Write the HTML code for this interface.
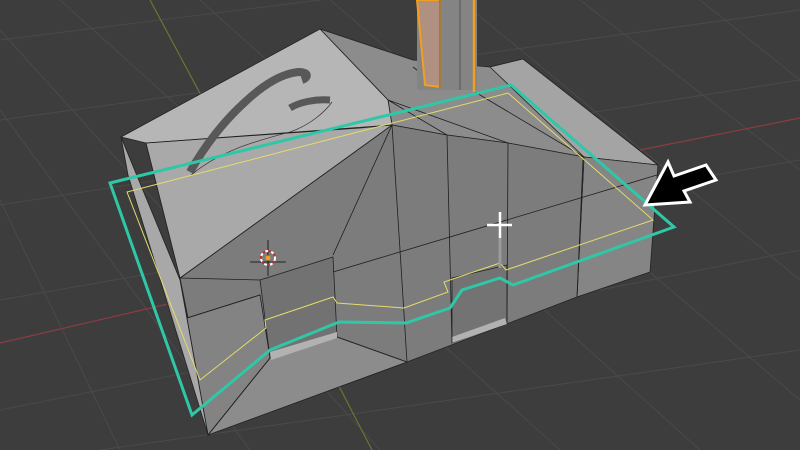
<!DOCTYPE html>
<html><head><meta charset="utf-8"><style>
html,body{margin:0;padding:0;background:#3d3d3d;width:800px;height:450px;overflow:hidden}
svg{display:block}
</style></head><body>
<svg width="800" height="450" viewBox="0 0 800 450" xmlns="http://www.w3.org/2000/svg">
<rect width="800" height="450" fill="#3d3d3d"/>
<g stroke="#4a4a4a" stroke-width="1" fill="none">
<path d="M0 40 L800 -60 M0 120 L800 10 M0 205 L800 80 M0 300 L800 160 M0 410 L800 250 M100 450 L800 350 M0 30 L380 450 M0 110 L250 450 M60 0 L560 450 M200 0 L700 450 M330 0 L800 400 M460 0 L800 280 M580 0 L800 170 M700 0 L800 80 M0 200 L120 450"/>
</g>
<path d="M0 343 L185 300" stroke="#8a3c44" stroke-width="1.2"/>
<path d="M640 150 L800 118" stroke="#8a3c44" stroke-width="1.2"/>
<path d="M150 0 L225 140" stroke="#6b7530" stroke-width="1.2"/>
<path d="M310 330 L372 450" stroke="#6b7530" stroke-width="1.2"/>
<g stroke="#222" stroke-width="0.8" stroke-linejoin="round">
<!-- back roof -->
<polygon points="320,29 413,60 490,67 523,59 584,157 508,143 447,135 392,125 388,100" fill="#8c8c8c"/>
<!-- right box top -->
<polygon points="490,67 523,59 658,165 584,157" fill="#a4a4a4"/>
<!-- right box front -->
<polygon points="584,157 658,165 650,272 577,297" fill="#858585"/>
<!-- front wall -->
<polygon points="180,278 392,125 447,135 508,143 584,157 577,297 407,362 208,435 188,318" fill="#7c7c7c"/>
<!-- lower bottom faces -->
<polygon points="270,358 337,337 407,362 208,435" fill="#8c8c8c"/>
<polygon points="187,318 260,295 270,358 208,435" fill="#838383"/>
<!-- left face -->
<polygon points="121,137 180,280 208,435 128,175" fill="#a8a8a8"/>
<!-- light roof -->
<polygon points="320,29 388,100 392,125 180,278 146,143 121,137" fill="#b6b6b6"/>
<polygon points="146,143 180,278 392,125 360,128" fill="#a9a9a9"/>
<!-- doors -->
<polygon points="260,280 333,257 337,337 270,358" fill="#727272"/>
<polygon points="452,278 507,265 507,323 452,343" fill="#737373"/>
</g>
<polygon points="270,352 337,332 337,338 271,360" fill="#b2b2b2"/>
<polygon points="452,337 505,318 507,324 452,343" fill="#b2b2b2"/>
<g stroke="#1f1f1f" stroke-width="0.8" fill="none">
<path d="M392,125 L333,255 M392,125 L400,250 L407,362 M447,135 L452,343 M508,143 L507,323 M583,160 L577,297 M337,337 L407,362 M270,358 L208,435 M187,318 L260,295 M333,272 L657,175 M180,278 L260,280 M388,100 L447,135 M388,100 L508,143 M413,67 L440,88 M475,92 L584,157 M146,143 L392,125"/>
</g>
<!-- heart groove -->
<path d="M190,172 C205,145 225,120 245,102 C262,86 280,74 298,72 C310,72 308,78 302,80" fill="none" stroke="#585858" stroke-width="8" stroke-linecap="butt"/>
<path d="M290,108 C300,102 315,99 330,100" fill="none" stroke="#585858" stroke-width="7"/>
<path d="M190,176 C220,150 260,140 290,132 C310,125 325,112 332,102" fill="none" stroke="#333" stroke-width="0.7"/>
<!-- pole -->
<rect x="417" y="0" width="60" height="90" fill="#848484"/>
<polygon points="417,0 440,0 440,87 425,85" fill="#b09080" stroke="#f0a020" stroke-width="2"/>
<path d="M474 0 L474 92" stroke="#f0a020" stroke-width="2.5"/>
<path d="M440 0 L440 88 M460 0 L460 90" stroke="#555" stroke-width="1"/>
<!-- outlines -->
<polygon points="110,183 511,85 674,227 513,285 500,278 462,290 450,308 406,323 339,322 270,350 192,415" fill="none" stroke="#2fc8a6" stroke-width="3" stroke-linejoin="miter"/>
<polygon points="127,192 508,93 653,220 506,270 500,263 444,282 448,292 404,308 337,303 333,297 265,320 266,328 200,380" fill="none" stroke="#e6dc6a" stroke-width="1"/>
<!-- crosshair -->
<path d="M500 238 V268" stroke="#9a9a9a" stroke-width="3"/>
<g stroke="#fff" stroke-width="2.5"><path d="M487 225 H512 M500 212 V238"/></g>
<!-- 3d cursor -->
<path d="M250 262 H286 M268 240 V276" stroke="#222" stroke-width="1"/>
<circle cx="268" cy="258" r="7" fill="none" stroke="#fff" stroke-width="2" stroke-dasharray="3 3"/>
<circle cx="268" cy="258" r="7" fill="none" stroke="#c03030" stroke-width="2" stroke-dasharray="3 3" stroke-dashoffset="3"/>
<circle cx="268" cy="258" r="2.5" fill="#f0a020"/>
<!-- arrow -->
<polygon points="645,205 668,162 674,176 706,165 716,180 684,191 690,202" fill="#000" stroke="#fff" stroke-width="3" stroke-linejoin="miter"/>
</svg>
</body></html>
